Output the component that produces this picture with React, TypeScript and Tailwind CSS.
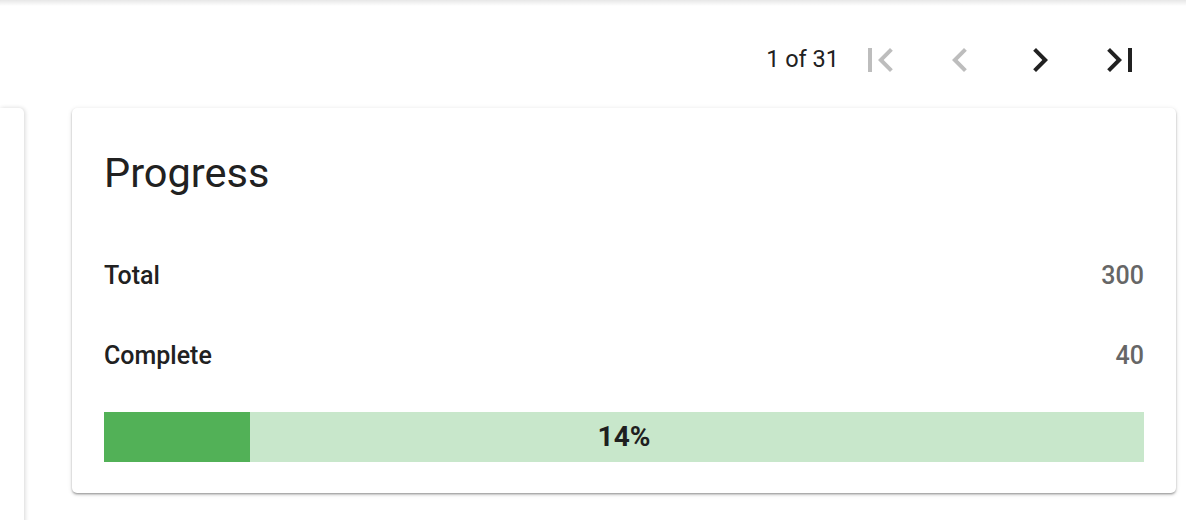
import { useState } from "react";

const PATHS = {
  first: "M18.41 16.59L13.82 12l4.59-4.59L17 6l-6 6 6 6zM6 6h2v12H6z",
  prev: "M15.41 7.41L14 6l-6 6 6 6 1.41-1.41L10.83 12z",
  next: "M10 6L8.59 7.41 13.17 12l-4.58 4.59L10 18l6-6z",
  last: "M5.59 7.41L10.18 12l-4.59 4.59L7 18l6-6-6-6zM16 6h2v12h-2z",
};

function PageButton({ d, disabled, onClick }: { d: string; disabled?: boolean; onClick?: () => void }) {
  return (
    <button
      onClick={onClick}
      disabled={disabled}
      className={
        disabled
          ? "flex h-[48px] w-[48px] items-center justify-center text-[#bdbdbd]"
          : "flex h-[48px] w-[48px] items-center justify-center text-[#212121]"
      }
    >
      <svg viewBox="0 0 24 24" className="h-[48px] w-[48px]" fill="currentColor">
        <path d={d} />
      </svg>
    </button>
  );
}

function StatRow({ label, value }: { label: string; value: number }) {
  return (
    <div className="flex h-[48px] items-center justify-between">
      <span className="text-[25px] font-medium leading-[48px] text-[#212121]">{label}</span>
      <span className="text-[25px] font-medium leading-[48px] text-[#666666]">{value}</span>
    </div>
  );
}

export default function App() {
  const [page, setPage] = useState(1);
  const pages = 31;
  const total = 300;
  const complete = 40;
  // rounded up, as the source shows 14% for 40 of 300
  const pct = Math.ceil((complete / total) * 100);

  return (
    <div className="relative h-[520px] w-[1186px] overflow-hidden bg-white font-['Roboto',sans-serif]">
      {/* shadow from the bar above */}
      <div className="absolute inset-x-0 top-0 h-[6px] bg-gradient-to-b from-[#e7e7e7] to-white" />

      <div className="flex">
        <div className="w-[24px] shrink-0 pt-[108px]">
          <div className="h-[480px] rounded-tr-[5px] bg-white shadow-[1px_0_4px_0_rgba(0,0,0,0.16)]" />
        </div>

        <div className="ml-[48px] flex w-[1104px] flex-col">
          <div className="mt-[36px] flex h-[48px] items-center justify-end pr-[32px]">
            <span className="mr-[17px] text-[23.5px] text-[#212121]">
              {page} of {pages}
            </span>
            <div className="flex gap-[32px]">
              <PageButton d={PATHS.first} disabled={page === 1} onClick={() => setPage(1)} />
              <PageButton d={PATHS.prev} disabled={page === 1} onClick={() => setPage(page - 1)} />
              <PageButton d={PATHS.next} disabled={page === pages} onClick={() => setPage(page + 1)} />
              <PageButton d={PATHS.last} disabled={page === pages} onClick={() => setPage(pages)} />
            </div>
          </div>

          <div className="mt-[24px] h-[385px] rounded-[5px] bg-white px-[32px] pt-[40px] shadow-[0_2px_3px_-1px_rgba(0,0,0,0.3),0_1px_2px_0_rgba(0,0,0,0.14),0_1px_5px_0_rgba(0,0,0,0.12)]">
            <h2 className="text-[41.5px] leading-[50px] text-[#212121]">Progress</h2>

            <div className="mt-[54px] flex flex-col gap-[32px]">
              <StatRow label="Total" value={total} />
              <StatRow label="Complete" value={complete} />
            </div>

            <div className="relative mt-[32px] h-[50px] bg-[#c8e7cb]">
              <div className="h-full bg-[#52b157]" style={{ width: `${pct}%` }} />
              <span className="absolute inset-0 flex items-center justify-center text-[28px] font-bold text-[#1f1f1f]">
                {pct}%
              </span>
            </div>
          </div>
        </div>
      </div>
    </div>
  );
}
